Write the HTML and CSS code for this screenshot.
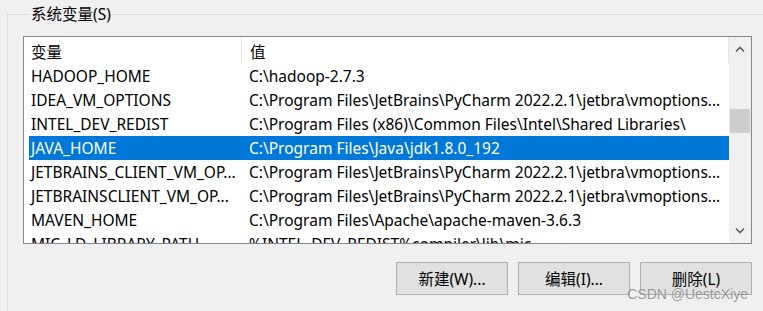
FILE: index.html
```html
<!DOCTYPE html>
<html lang="zh-CN">
<head>
    <meta charset="UTF-8">
    <meta name="viewport" content="width=device-width, initial-scale=1.0">
    <title>系统变量</title>
    <link rel="stylesheet" href="styles.css">
</head>
<body>
    <fieldset class="group">
        <legend>系统变量(S)</legend>
        <div class="list">
            <div class="rows">
                <div class="row header">
                    <div class="col name">变量</div>
                    <div class="col value">值</div>
                </div>
                <div class="row"><div class="col name">HADOOP_HOME</div><div class="col value">C:\hadoop-2.7.3</div></div>
                <div class="row"><div class="col name">IDEA_VM_OPTIONS</div><div class="col value">C:\Program Files\JetBrains\PyCharm 2022.2.1\jetbra\vmoptions...</div></div>
                <div class="row"><div class="col name">INTEL_DEV_REDIST</div><div class="col value">C:\Program Files (x86)\Common Files\Intel\Shared Libraries\</div></div>
                <div class="row selected"><div class="col name">JAVA_HOME</div><div class="col value">C:\Program Files\Java\jdk1.8.0_192</div></div>
                <div class="row"><div class="col name">JETBRAINS_CLIENT_VM_OP...</div><div class="col value">C:\Program Files\JetBrains\PyCharm 2022.2.1\jetbra\vmoptions...</div></div>
                <div class="row"><div class="col name">JETBRAINSCLIENT_VM_OP...</div><div class="col value">C:\Program Files\JetBrains\PyCharm 2022.2.1\jetbra\vmoptions...</div></div>
                <div class="row"><div class="col name">MAVEN_HOME</div><div class="col value">C:\Program Files\Apache\apache-maven-3.6.3</div></div>
                <div class="row"><div class="col name">MIC_LD_LIBRARY_PATH</div><div class="col value">%INTEL_DEV_REDIST%compiler\lib\mic</div></div>
            </div>
            <div class="scrollbar">
                <div class="arrow">
                    <svg width="10" height="6" viewBox="0 0 10 6"><polyline points="1,5.5 5,1.5 9,5.5" fill="none" stroke="#606060" stroke-width="1.6"/></svg>
                </div>
                <div class="track"><div class="thumb"></div></div>
                <div class="arrow">
                    <svg width="10" height="6" viewBox="0 0 10 6"><polyline points="1,0.5 5,4.5 9,0.5" fill="none" stroke="#606060" stroke-width="1.6"/></svg>
                </div>
            </div>
        </div>
        <div class="buttons">
            <button>新建(W)...</button>
            <button>编辑(I)...</button>
            <button>删除(L)</button>
        </div>
    </fieldset>
    <div class="watermark">CSDN @UestcXiye</div>
</body>
</html>
```

FILE: styles.css
```css
body {
    margin: 0;
    height: 311px;
    overflow: hidden;
    background-color: #f0f0f0;
    font-family: "Noto Sans", "Noto Sans CJK SC", sans-serif;
    font-size: 15.5px;
    color: #000;
}
.group {
    margin: 4px 0 0 7px;
    padding: 0 11px 0 15px;
    min-width: 0;
    height: 320px;
    border: 1px solid #dcdcdc;
    border-right: none;
    border-bottom: none;
}
.group legend {
    margin-left: 6px;
    padding: 0 2px;
    line-height: 20px;
}
.list {
    display: flex;
    margin-top: 12px;
    height: 206px;
    background: #fff;
    border: 1px solid #828790;
}
.rows {
    flex: 1;
    min-width: 0;
    padding-left: 5px;
    overflow: hidden;
}
.row {
    display: flex;
    height: 24px;
    line-height: 24px;
    white-space: nowrap;
}
.row.header {
    height: 27px;
    line-height: 30px;
}
.row.header .col {
    border-right: 1px solid #e5e5e5;
}
.col {
    overflow: hidden;
}
.col.name {
    width: 210px;
    flex: none;
    padding-left: 2px;
}
.col.value {
    flex: 1;
    padding-left: 8px;
}
.row.selected {
    background-color: #0078d7;
    color: #fff;
}
.scrollbar {
    width: 22px;
    display: flex;
    flex-direction: column;
    background: #f0f0f0;
}
.arrow {
    height: 24px;
    display: flex;
    align-items: center;
    justify-content: center;
}
.track {
    flex: 1;
    padding: 48px 1px 0;
}
.thumb {
    height: 24px;
    background: #cdcdcd;
}
.buttons {
    display: flex;
    justify-content: flex-end;
    gap: 10px;
    margin-top: 18px;
}
button {
    width: 112px;
    height: 33px;
    padding: 0;
    background-color: #e1e1e1;
    border: 1px solid #adadad;
    font-family: inherit;
    font-size: 15.5px;
    color: #000;
}
.watermark {
    position: absolute;
    top: 286px;
    right: 15px;
    font-family: "Liberation Sans", sans-serif;
    font-size: 14px;
    color: rgba(120, 120, 120, 0.75);
    text-shadow: 0 0 2px rgba(255, 255, 255, 0.6);
}
```
